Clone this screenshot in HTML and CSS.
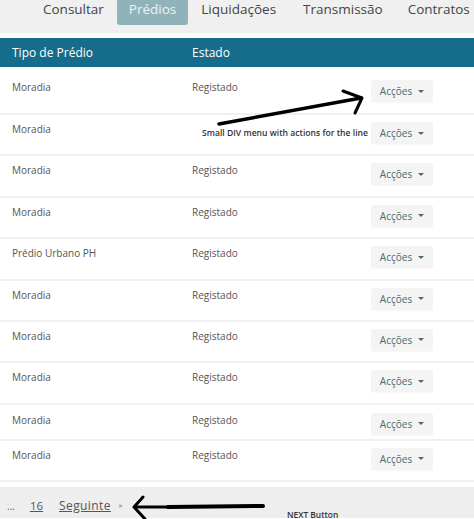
FILE: index.html
```html
<!DOCTYPE html>
<html lang="pt">
<head>
<meta charset="utf-8">
<title>Prédios</title>
<link rel="stylesheet" href="styles.css">
</head>
<body>
<div class="page">
  <nav class="tabs">
    <span class="tab">Consultar</span>
    <span class="tab active">Prédios</span>
    <span class="tab">Liquidações</span>
    <span class="tab">Transmissão</span>
    <span class="tab">Contratos</span>
  </nav>
  <div class="table">
    <div class="thead">
      <span>Tipo de Prédio</span>
      <span>Estado</span>
      <span></span>
    </div>
    <div class="row first"><span>Moradia</span><span>Registado</span><span class="btn">Acções <i class="caret"></i></span></div>
    <div class="row"><span>Moradia</span><span></span><span class="btn">Acções <i class="caret"></i></span></div>
    <div class="row"><span>Moradia</span><span>Registado</span><span class="btn">Acções <i class="caret"></i></span></div>
    <div class="row"><span>Moradia</span><span>Registado</span><span class="btn">Acções <i class="caret"></i></span></div>
    <div class="row"><span>Prédio Urbano PH</span><span>Registado</span><span class="btn">Acções <i class="caret"></i></span></div>
    <div class="row"><span>Moradia</span><span>Registado</span><span class="btn">Acções <i class="caret"></i></span></div>
    <div class="row"><span>Moradia</span><span>Registado</span><span class="btn">Acções <i class="caret"></i></span></div>
    <div class="row"><span>Moradia</span><span>Registado</span><span class="btn">Acções <i class="caret"></i></span></div>
    <div class="row short"><span>Moradia</span><span>Registado</span><span class="btn">Acções <i class="caret"></i></span></div>
    <div class="row"><span>Moradia</span><span>Registado</span><span class="btn">Acções <i class="caret"></i></span></div>
  </div>
  <div class="pager">
    <span class="dots">...</span>
    <a class="plink num">16</a>
    <a class="plink next">Seguinte</a>
    <span class="raquo">»</span>
  </div>

  <span class="note note-menu">Small DIV menu with actions for the line</span>
  <span class="note note-next">NEXT Button</span>
  <svg class="annot" width="474" height="519" viewBox="0 0 474 519" aria-hidden="true">
    <g fill="none" stroke="#000" stroke-linecap="round" stroke-linejoin="round">
      <path d="M219 124 L361 98" stroke-width="3.5"/>
      <path d="M343 91 L362 98 L355 113" stroke-width="3"/>
      <path d="M135 507 L168 507" stroke-width="3"/>
      <path d="M168 507 L263 506" stroke-width="4"/>
      <path d="M143 497 L134 507 L145 519" stroke-width="3"/>
    </g>
  </svg>
</div>
</body>
</html>
```
FILE: styles.css
```css
html, body {
  margin: 0;
  padding: 0;
  background: #fff;
}
body {
  font-family: "Open Sans", "DejaVu Sans", sans-serif;
  color: #555;
  width: 474px;
  height: 519px;
  overflow: hidden;
}
.page {
  position: relative;
  width: 474px;
  height: 519px;
}
.tabs {
  display: flex;
  align-items: flex-start;
  height: 33px;
  background: #f0f0f0;
  padding-left: 31px;
  white-space: nowrap;
  overflow: hidden;
}
.tab {
  display: block;
  height: 25px;
  line-height: 19px;
  padding: 0 12px;
  margin-right: 1px;
  font-size: 13.5px;
  color: #444;
  border-radius: 0 0 3px 3px;
}
.tab.active {
  background: #8fb2bb;
  color: #eef4f6;
}
.tabs .tab:nth-child(3) { margin-right: 2px; }
.tabs .tab:nth-child(4) { margin-left: 1px; }
.table {
  margin-top: 5px;
}
.thead, .row {
  display: grid;
  grid-template-columns: 180px 179px 62px;
  padding-left: 12px;
}
.thead {
  height: 29px;
  align-items: center;
  background: #156c8b;
  color: #fff;
  font-size: 12px;
}
.row {
  box-sizing: border-box;
  height: 41.4px;
  padding-top: 7px;
  align-items: start;
  font-size: 10px;
  line-height: 14px;
  color: #555;
  border-bottom: 2px solid #f0f0f0;
}
.row.first {
  height: 48px;
  padding-top: 13px;
}
.row.short {
  height: 36px;
  padding-top: 8px;
}
.btn {
  display: flex;
  align-items: center;
  justify-content: center;
  gap: 6px;
  height: 22px;
  background: #f4f4f4;
  border-radius: 2px;
  color: #4a6a6e;
  font-size: 10px;
  box-shadow: 0 1px 1px rgba(0,0,0,0.03);
}
.caret {
  display: inline-block;
  width: 0;
  height: 0;
  border-left: 3px solid transparent;
  border-right: 3px solid transparent;
  border-top: 3.5px solid #4a6a6e;
}
.pager {
  margin-top: 5px;
  height: 31px;
  background: #eeeeee;
  display: flex;
  align-items: center;
  padding-left: 7px;
  padding-top: 6px;
  box-sizing: border-box;
  font-size: 12px;
  color: #555;
}
.dots {
  font-size: 10px;
  margin-right: 15px;
}
.plink {
  text-decoration: underline;
  color: #555;
}
.plink.num {
  margin-right: 16px;
  font-size: 11.5px;
}
.plink.next {
  letter-spacing: 0.4px;
  margin-right: 8px;
}
.raquo {
  font-size: 7px;
}
.note {
  position: absolute;
  font-family: "Open Sans", "DejaVu Sans", sans-serif;
  font-weight: 600;
  color: #333;
  white-space: nowrap;
}
.note-menu {
  left: 202px;
  top: 127px;
  font-size: 8.6px;
}
.note-next {
  left: 287px;
  top: 509px;
  font-size: 8.4px;
}
.annot {
  position: absolute;
  left: 0;
  top: 0;
  pointer-events: none;
}
```
